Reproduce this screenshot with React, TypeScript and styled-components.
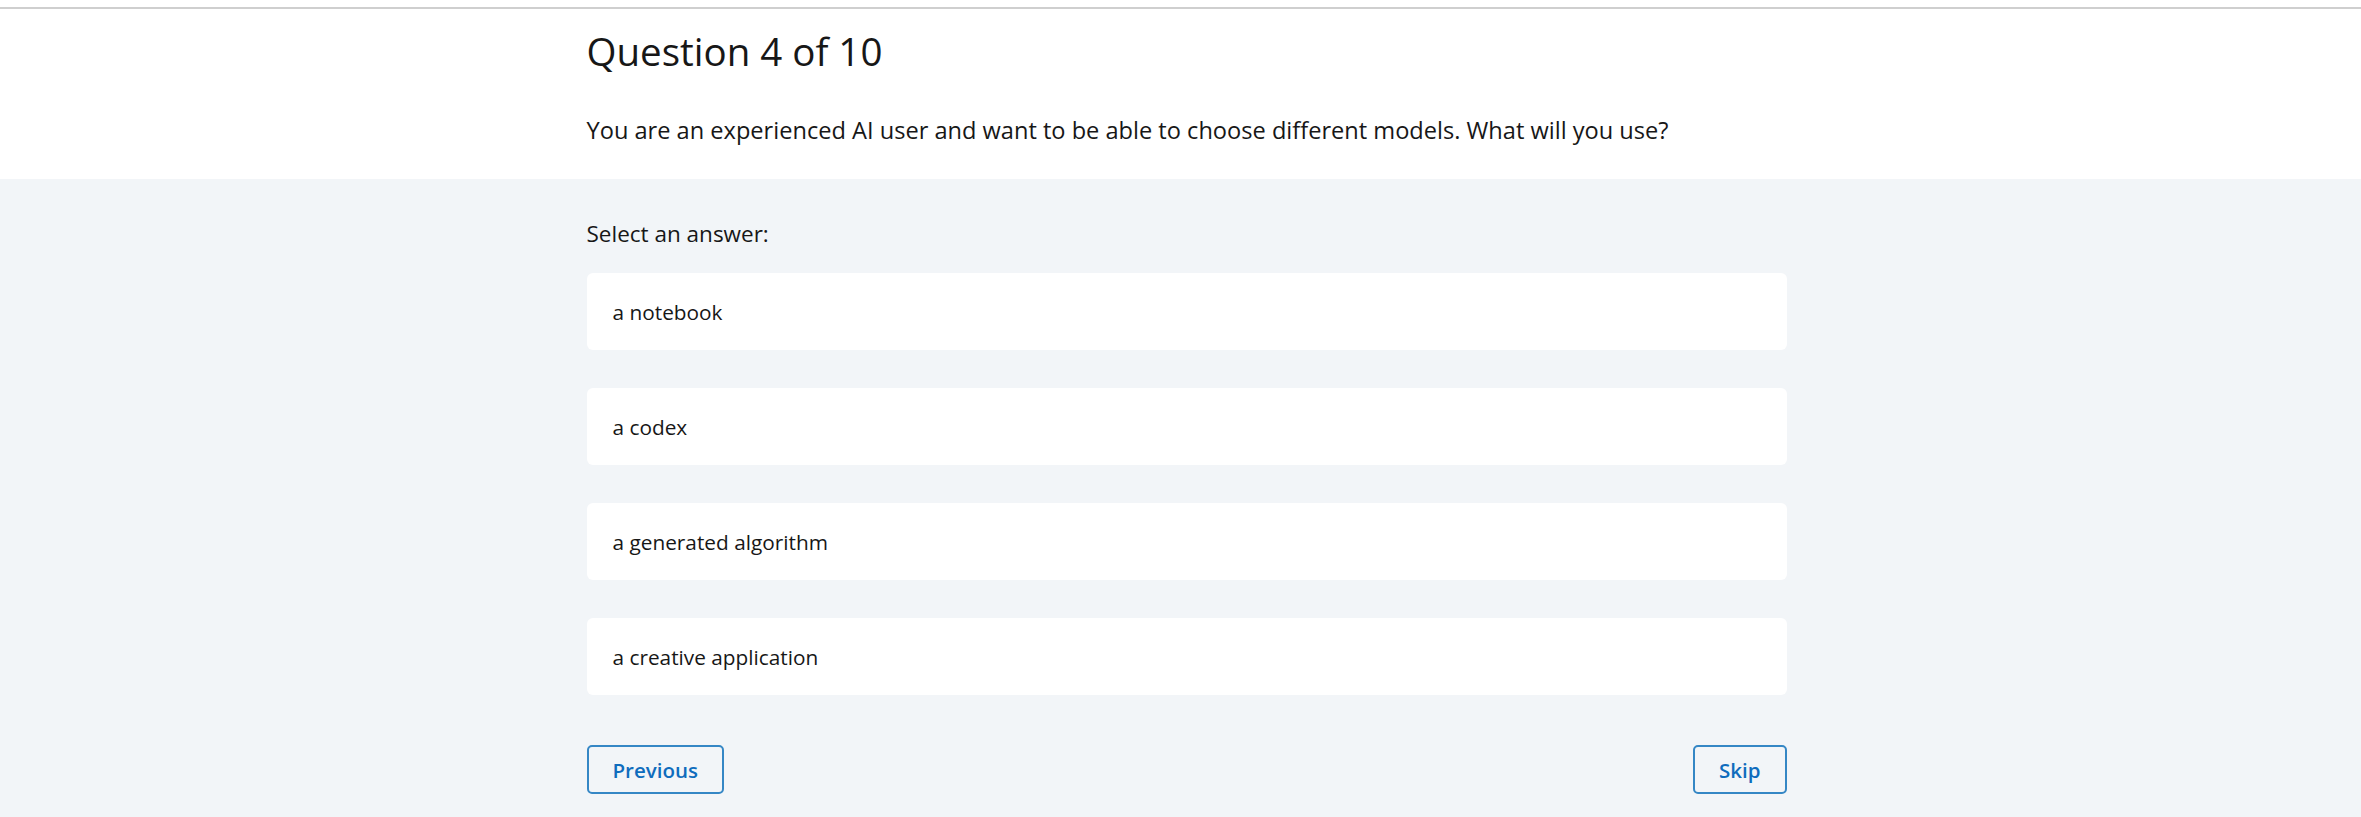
import styled, { createGlobalStyle } from 'styled-components';

const GlobalStyle = createGlobalStyle`
    * {
        box-sizing: border-box;
    }
    html, body {
        margin: 0;
        padding: 0;
        background: #ffffff;
    }
    body {
        font-family: "Open Sans", "Noto Sans", sans-serif;
        color: #171717;
    }
`;

const Page = styled.div`
    display: flex;
    flex-direction: column;
    min-height: 817px;
`;

const TopStrip = styled.div`
    height: 9px;
    background: #ffffff;
    border-bottom: 2px solid #cfcfcf;
    box-shadow: 0 2px 4px rgba(0, 0, 0, 0.06);
`;

const Header = styled.header`
    background: #ffffff;
    padding: 15px 0 33px;
`;

const Body = styled.main`
    flex: 1;
    background: #f2f5f8;
    padding: 39px 0 20px;
`;

const Container = styled.div`
    width: 1200px;
    margin-left: calc((100% - 1200px) / 2 + 6px);
`;

const Heading = styled.h1`
    margin: 0;
    font-size: 38.5px;
    font-weight: 400;
    line-height: 54px;
`;

const QuestionText = styled.p`
    margin: 36px 0 0;
    font-size: 23.6px;
    line-height: 32px;
`;

const Prompt = styled.p`
    margin: 0 0 23px;
    font-size: 22.5px;
    line-height: 32px;
`;

const OptionList = styled.div`
    display: flex;
    flex-direction: column;
    gap: 38px;
`;

const Option = styled.button`
    display: flex;
    align-items: center;
    height: 77px;
    padding: 0 26px;
    border: none;
    border-radius: 6px;
    background: #ffffff;
    font-family: inherit;
    font-size: 20.8px;
    color: #171717;
    text-align: left;
    cursor: pointer;
`;

const ButtonRow = styled.div`
    display: flex;
    justify-content: space-between;
    margin-top: 50px;
`;

const NavButton = styled.button`
    height: 49px;
    padding: 0 24px;
    border: 2px solid #3587c5;
    border-radius: 5px;
    background: transparent;
    color: #0f6cbd;
    font-family: inherit;
    font-size: 20.5px;
    font-weight: 600;
    cursor: pointer;
`;

const answers = [
    'a notebook',
    'a codex',
    'a generated algorithm',
    'a creative application',
];

const App = () => {
    return (
        <>
            <GlobalStyle />
            <Page>
                <TopStrip />
                <Header>
                    <Container>
                        <Heading>Question 4 of 10</Heading>
                        <QuestionText>
                            You are an experienced AI user and want to be able to choose different models. What will you use?
                        </QuestionText>
                    </Container>
                </Header>
                <Body>
                    <Container>
                        <Prompt>Select an answer:</Prompt>
                        <OptionList>
                            {answers.map(answer => (
                                <Option key={answer}>{answer}</Option>
                            ))}
                        </OptionList>
                        <ButtonRow>
                            <NavButton>Previous</NavButton>
                            <NavButton>Skip</NavButton>
                        </ButtonRow>
                    </Container>
                </Body>
            </Page>
        </>
    );
};

export default App;
